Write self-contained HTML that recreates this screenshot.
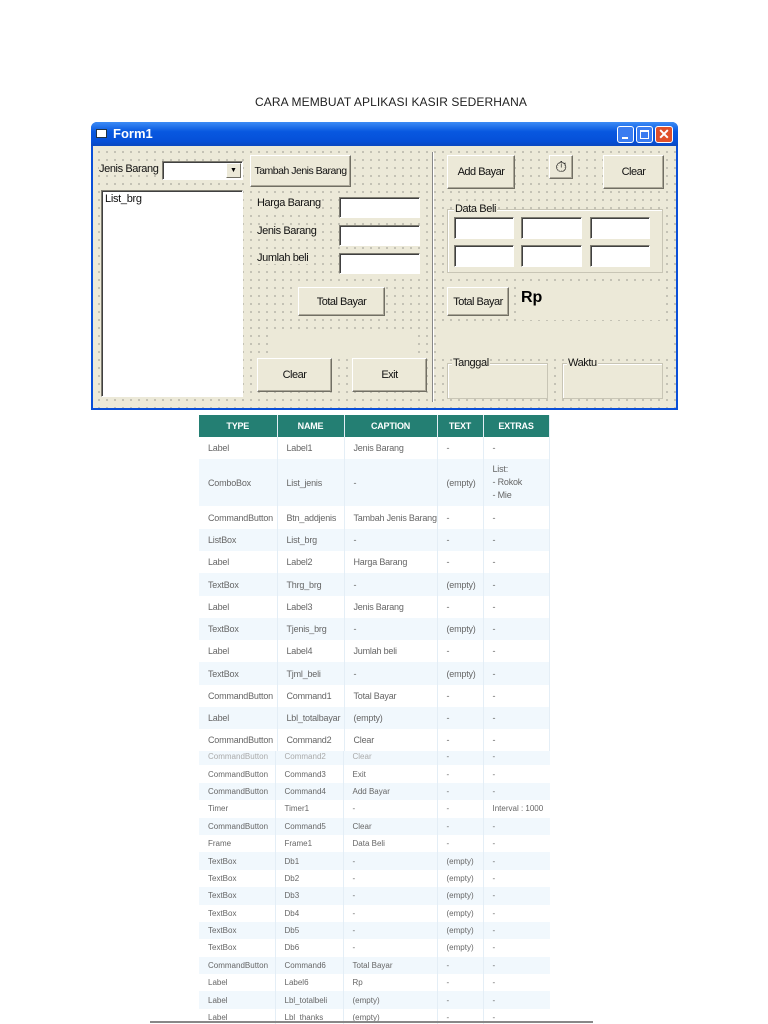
<!DOCTYPE html>
<html><head><meta charset="utf-8"><style>
*{margin:0;padding:0;box-sizing:border-box}
body{width:768px;height:1024px;background:#fff;position:relative;overflow:hidden;font-family:"Liberation Sans",sans-serif}
.a{position:absolute}
.title{left:0;width:782px;top:95px;text-align:center;font-size:12px;color:#222;letter-spacing:0.1px}
.win{left:91px;top:122px;width:587px;height:288px;background:#0a4fd8;border-radius:6px 6px 0 0}
.tb{left:0;top:0;width:587px;height:24px;border-radius:6px 6px 0 0;background:linear-gradient(#3d8cf5,#0858e0 40%,#0650d8 80%,#0a48c0)}
.client{left:93px;top:146px;width:583px;height:262px;background-color:#ece9d8;background-image:radial-gradient(circle,#555 0.5px,transparent 0.8px);background-size:8px 8px;background-position:2px 2px}
.pn{background:#ece9d8}
.btn{position:absolute;background:#ece9d8;border:1px solid;border-color:#fff #716f64 #716f64 #fff;box-shadow:inset -1px -1px 0 #aca899;font-size:11px;display:flex;align-items:center;justify-content:center;color:#111;letter-spacing:-0.5px;white-space:nowrap}
.tx{position:absolute;background:#fff;border:1px solid;border-color:#7f7d72 #fff #fff #7f7d72;box-shadow:inset 1px 1px 0 #404040}
.lb{position:absolute;font-size:11px;color:#111;letter-spacing:-0.4px;background:#ece9d8;white-space:nowrap}
.fr{position:absolute;border:1px solid #c8c5b5;box-shadow:1px 1px 0 #fff inset;background:#ece9d8}
.fr span{position:absolute;top:-7px;left:6px;background:#ece9d8;font-size:11px;padding:0 1px;color:#111;letter-spacing:-0.4px}
table{border-collapse:collapse;position:absolute;font-family:"Liberation Sans",sans-serif;color:#666;table-layout:fixed}
td,th{padding:0 0 0 9px;text-align:left;border-right:1px solid #e4eef6;white-space:nowrap;overflow:hidden}
th{background:#247f73;color:#fff;font-size:9px;text-align:center;padding:0;font-weight:bold}
tr:nth-child(odd) td{background:#f1f8fd}
tr:nth-child(even) td{background:#fff}
.t1{left:199px;top:415px;width:350px;font-size:9px;letter-spacing:-0.2px}
.t2{left:199px;top:751px;width:351px;font-size:8px}
.t2 tr td{height:17.4px}
</style></head><body>
<div class="a title">CARA MEMBUAT APLIKASI KASIR SEDERHANA</div>
<div class="a win"><div class="a tb"></div>
<div class="a" style="left:5px;top:7px;width:11px;height:9px;background:#fff;border:1px solid #234"></div>
<div class="a" style="left:22px;top:4px;color:#fff;font-weight:bold;font-size:13px">Form1</div>
<div class="a" style="left:526px;top:4px;width:17px;height:17px;border:1px solid #fff;border-radius:3px;background:#3a7cf0"><div class="a" style="left:4px;top:10px;width:6px;height:2px;background:#fff"></div></div>
<div class="a" style="left:545px;top:4px;width:17px;height:17px;border:1px solid #fff;border-radius:3px;background:#3a7cf0"><div class="a" style="left:3px;top:3px;width:9px;height:9px;border:1px solid #fff;border-top-width:2px"></div></div>
<div class="a" style="left:564px;top:4px;width:18px;height:17px;border:1px solid #fff;border-radius:3px;background:#e0502a;color:#fff;font-size:14px;font-weight:bold;text-align:center;line-height:15px">✕</div>
</div>
<div class="a client"></div>
<div class="a pn" style="left:268px;top:333px;width:150px;height:20px"></div>
<div class="a pn" style="left:440px;top:323px;width:230px;height:30px"></div>
<div class="a pn" style="left:520px;top:282px;width:140px;height:38px"></div>
<div class="a" style="left:432px;top:152px;width:2px;height:250px;border-left:1px solid #888;border-right:1px solid #fff"></div>
<div class="lb" style="left:99px;top:163px">Jenis Barang</div>
<div class="tx" style="left:162px;top:161px;width:81px;height:19px"><div class="a" style="right:1px;top:1px;width:15px;height:15px;background:#ece9d8;border:1px solid;border-color:#fff #716f64 #716f64 #fff;font-size:7px;text-align:center;line-height:14px">▼</div></div>
<div class="btn" style="left:250px;top:155px;width:101px;height:32px;font-size:10.5px">Tambah Jenis Barang</div>
<div class="tx" style="left:101px;top:190px;width:142px;height:207px"><div class="a" style="left:3px;top:2px;font-size:11px;color:#111;letter-spacing:-0.3px">List_brg</div></div>
<div class="lb" style="left:257px;top:197px">Harga Barang</div>
<div class="lb" style="left:257px;top:225px">Jenis Barang</div>
<div class="lb" style="left:257px;top:252px">Jumlah beli</div>
<div class="tx" style="left:339px;top:197px;width:81px;height:21px"></div>
<div class="tx" style="left:339px;top:225px;width:81px;height:21px"></div>
<div class="tx" style="left:339px;top:253px;width:81px;height:21px"></div>
<div class="btn" style="left:298px;top:287px;width:87px;height:29px">Total Bayar</div>
<div class="btn" style="left:257px;top:358px;width:75px;height:34px">Clear</div>
<div class="btn" style="left:352px;top:358px;width:75px;height:34px">Exit</div>
<div class="btn" style="left:447px;top:155px;width:68px;height:34px">Add Bayar</div>
<div class="btn" style="left:549px;top:155px;width:24px;height:24px;font-size:15px">⏱</div>
<div class="btn" style="left:603px;top:155px;width:61px;height:34px">Clear</div>
<div class="fr" style="left:447px;top:209px;width:216px;height:64px"><span>Data Beli</span></div>
<div class="tx" style="left:454px;top:217px;width:60px;height:22px"></div>
<div class="tx" style="left:521px;top:217px;width:61px;height:22px"></div>
<div class="tx" style="left:590px;top:217px;width:60px;height:22px"></div>
<div class="tx" style="left:454px;top:245px;width:60px;height:22px"></div>
<div class="tx" style="left:521px;top:245px;width:61px;height:22px"></div>
<div class="tx" style="left:590px;top:245px;width:60px;height:22px"></div>
<div class="btn" style="left:447px;top:287px;width:62px;height:29px">Total Bayar</div>
<div class="a" style="left:521px;top:289px;font-size:16px;font-weight:bold;color:#000;background:#ece9d8">Rp</div>
<div class="fr" style="left:447px;top:363px;width:101px;height:36px"><span style="left:4px">Tanggal</span></div>
<div class="fr" style="left:562px;top:363px;width:101px;height:36px"><span style="left:4px">Waktu</span></div>

<table class="t1">
<colgroup><col style="width:78px"><col style="width:67px"><col style="width:93px"><col style="width:46px"><col style="width:66px"></colgroup>
<tr style="height:22px"><th>TYPE</th><th>NAME</th><th>CAPTION</th><th>TEXT</th><th>EXTRAS</th></tr>
<tr style="height:22px"><td>Label</td><td>Label1</td><td>Jenis Barang</td><td>-</td><td>-</td></tr>
<tr style="height:47px"><td>ComboBox</td><td>List_jenis</td><td>-</td><td>(empty)</td><td style="line-height:13px">List:<br>- Rokok<br>- Mie</td></tr>
<tr style="height:23px"><td>CommandButton</td><td>Btn_addjenis</td><td>Tambah Jenis Barang</td><td>-</td><td>-</td></tr>
<tr style="height:22px"><td>ListBox</td><td>List_brg</td><td>-</td><td>-</td><td>-</td></tr>
<tr style="height:22px"><td>Label</td><td>Label2</td><td>Harga Barang</td><td>-</td><td>-</td></tr>
<tr style="height:23px"><td>TextBox</td><td>Thrg_brg</td><td>-</td><td>(empty)</td><td>-</td></tr>
<tr style="height:22px"><td>Label</td><td>Label3</td><td>Jenis Barang</td><td>-</td><td>-</td></tr>
<tr style="height:22px"><td>TextBox</td><td>Tjenis_brg</td><td>-</td><td>(empty)</td><td>-</td></tr>
<tr style="height:22px"><td>Label</td><td>Label4</td><td>Jumlah beli</td><td>-</td><td>-</td></tr>
<tr style="height:23px"><td>TextBox</td><td>Tjml_beli</td><td>-</td><td>(empty)</td><td>-</td></tr>
<tr style="height:22px"><td>CommandButton</td><td>Command1</td><td>Total Bayar</td><td>-</td><td>-</td></tr>
<tr style="height:22px"><td>Label</td><td>Lbl_totalbayar</td><td>(empty)</td><td>-</td><td>-</td></tr>
<tr style="height:22px"><td>CommandButton</td><td>Command2</td><td>Clear</td><td>-</td><td>-</td></tr>
</table>
<div class="a" style="left:199px;top:751px;width:351px;height:273px;overflow:hidden;background:#fff">
<table class="t2" style="left:0;top:-3px">
<colgroup><col style="width:76px"><col style="width:68px"><col style="width:94px"><col style="width:46px"><col style="width:67px"></colgroup>
<tr><td style="color:#aaa">CommandButton</td><td style="color:#aaa">Command2</td><td style="color:#aaa">Clear</td><td>-</td><td>-</td></tr>
<tr><td>CommandButton</td><td>Command3</td><td>Exit</td><td>-</td><td>-</td></tr>
<tr><td>CommandButton</td><td>Command4</td><td>Add Bayar</td><td>-</td><td>-</td></tr>
<tr><td>Timer</td><td>Timer1</td><td>-</td><td>-</td><td>Interval : 1000</td></tr>
<tr><td>CommandButton</td><td>Command5</td><td>Clear</td><td>-</td><td>-</td></tr>
<tr><td>Frame</td><td>Frame1</td><td>Data Beli</td><td>-</td><td>-</td></tr>
<tr><td>TextBox</td><td>Db1</td><td>-</td><td>(empty)</td><td>-</td></tr>
<tr><td>TextBox</td><td>Db2</td><td>-</td><td>(empty)</td><td>-</td></tr>
<tr><td>TextBox</td><td>Db3</td><td>-</td><td>(empty)</td><td>-</td></tr>
<tr><td>TextBox</td><td>Db4</td><td>-</td><td>(empty)</td><td>-</td></tr>
<tr><td>TextBox</td><td>Db5</td><td>-</td><td>(empty)</td><td>-</td></tr>
<tr><td>TextBox</td><td>Db6</td><td>-</td><td>(empty)</td><td>-</td></tr>
<tr><td>CommandButton</td><td>Command6</td><td>Total Bayar</td><td>-</td><td>-</td></tr>
<tr><td>Label</td><td>Label6</td><td>Rp</td><td>-</td><td>-</td></tr>
<tr><td>Label</td><td>Lbl_totalbeli</td><td>(empty)</td><td>-</td><td>-</td></tr>
<tr><td>Label</td><td>Lbl_thanks</td><td>(empty)</td><td>-</td><td>-</td></tr>
</table></div>
<div class="a" style="left:150px;top:1021px;width:443px;height:2px;background:#888"></div>
</body></html>
